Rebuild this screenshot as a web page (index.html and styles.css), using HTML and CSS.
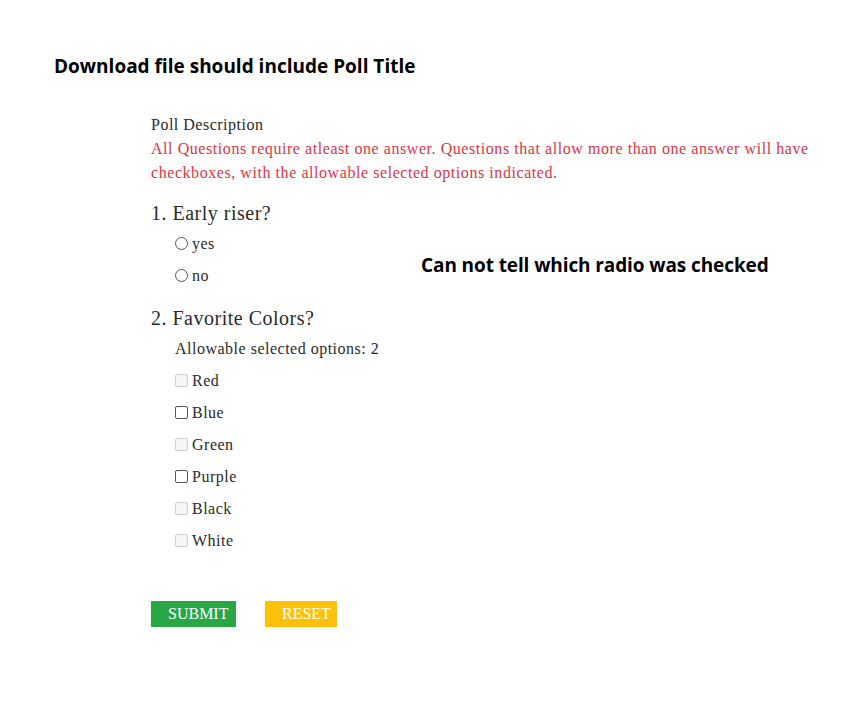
FILE: index.html
```html
<!DOCTYPE html>
<html>
<head>
<meta charset="utf-8">
<link rel="stylesheet" href="styles.css">
</head>
<body>
<div class="page">
  <h1 class="title">Download file should include Poll Title</h1>
  <div class="poll">
    <div class="desc">Poll Description</div>
    <div class="note-red">All Questions require atleast one answer. Questions that allow more than one answer will have checkboxes, with the allowable selected options indicated.</div>

    <div class="q-row">
      <div class="question q-first">
        <div class="q-title">1. Early riser?</div>
        <div class="options">
          <div class="opt"><span class="radio"></span>yes</div>
          <div class="opt"><span class="radio"></span>no</div>
        </div>
      </div>
      <div class="remark">Can not tell which radio was checked</div>
    </div>

    <div class="question q-second">
      <div class="q-title">2. Favorite Colors?</div>
      <div class="options">
        <div class="opt allow">Allowable selected options: 2</div>
        <div class="opt"><span class="check disabled"></span>Red</div>
        <div class="opt"><span class="check"></span>Blue</div>
        <div class="opt"><span class="check disabled"></span>Green</div>
        <div class="opt"><span class="check"></span>Purple</div>
        <div class="opt"><span class="check disabled"></span>Black</div>
        <div class="opt"><span class="check disabled"></span>White</div>
      </div>
    </div>

    <div class="buttons">
      <button class="btn btn-submit">SUBMIT</button>
      <button class="btn btn-reset">RESET</button>
    </div>
  </div>
</div>
</body>
</html>
```
FILE: styles.css
```css
html, body {
  margin: 0;
  padding: 0;
  background: #fff;
}
.page {
  padding: 52px 0 0 54px;
  font-family: "Liberation Serif", "Times New Roman", serif;
  color: #2a2a2a;
}
.title {
  margin: 0;
  font-family: "Open Sans", "Noto Sans", sans-serif;
  font-weight: 700;
  font-size: 19px;
  line-height: 28px;
  color: #000;
  letter-spacing: 0;
}
.poll {
  margin: 33px 0 0 97px;
  font-size: 16px;
  letter-spacing: 0.5px;
}
.desc {
  line-height: 24px;
}
.note-red {
  color: #dc3545;
  line-height: 24px;
  width: 680px;
  letter-spacing: 0.56px;
}
.q-row {
  display: flex;
  align-items: flex-end;
}
.q-first {
  margin-top: 16px;
  width: 270px;
}
.q-second {
  margin-top: 14px;
}
.q-title {
  font-size: 20px;
  line-height: 24px;
}
.options {
  padding-left: 24px;
  padding-top: 3px;
}
.opt {
  display: flex;
  align-items: center;
  height: 32px;
}
.radio {
  width: 11px;
  height: 11px;
  border: 1px solid #555;
  border-radius: 50%;
  margin: 0 4px 2px 0;
}
.check {
  width: 11px;
  height: 11px;
  border: 1px solid #555;
  border-radius: 2px;
  margin: 0 4px 2px 0;
}
.check.disabled {
  border-color: #d0d0d0;
  background: #f6f6f6;
}
.remark {
  font-family: "Open Sans", "Noto Sans", sans-serif;
  font-weight: 700;
  font-size: 19px;
  color: #000;
  letter-spacing: -0.1px;
  margin: 0 0 15px 0;
  line-height: 24px;
  white-space: nowrap;
}
.buttons {
  display: flex;
  gap: 29px;
  margin-top: 44px;
}
.btn {
  border: none;
  height: 26px;
  padding: 0 0 0 17px;
  text-align: left;
  font-family: "Liberation Serif", "Times New Roman", serif;
  font-size: 16px;
  color: #fff;
  letter-spacing: 0;
}
.btn-submit {
  width: 85px;
  background: #28a745;
}
.btn-reset {
  width: 72px;
  background: #ffc107;
}
```
